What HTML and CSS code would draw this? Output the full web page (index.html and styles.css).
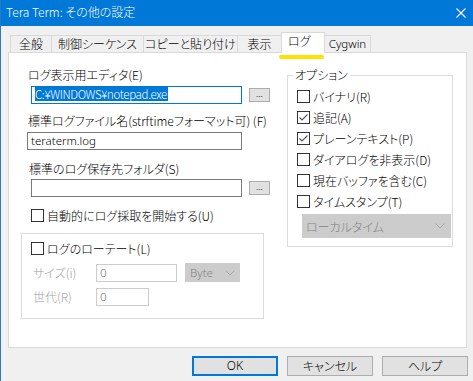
FILE: index.html
```html
<!DOCTYPE html>
<html lang="ja">
<head>
<meta charset="utf-8">
<title>Tera Term: その他の設定</title>
<link rel="stylesheet" href="styles.css">
</head>
<body>
<div class="window">
  <div class="titlebar">
    <span class="title">Tera Term: その他の設定</span>
    <svg class="close" width="10" height="10" viewBox="0 0 10 10"><path d="M0.5 0.5 L9.5 9.5 M9.5 0.5 L0.5 9.5" stroke="#fff" stroke-width="1.1" fill="none"/></svg>
  </div>
  <div class="tabs">
    <div class="tab t1">全般</div>
    <div class="tab t2">制御シーケンス</div>
    <div class="tab t3">コピーと貼り付け</div>
    <div class="tab t4">表示</div>
    <div class="tab t5 active">ログ</div>
    <div class="tab t6">Cygwin</div>
  </div>
  <div class="panel">
    <div class="marker"></div>
    <div class="leftcol">
      <div class="label l1">ログ表示用エディタ(E)</div>
      <div class="row r1">
        <div class="edit focused e1"><span class="sel">C:¥WINDOWS¥notepad.exe</span></div>
        <div class="dots">...</div>
      </div>
      <div class="label l2">標準ログファイル名(strftimeフォーマット可) (F)</div>
      <div class="edit e2">teraterm.log</div>
      <div class="label l3">標準のログ保存先フォルダ(S)</div>
      <div class="row r3">
        <div class="edit e3"></div>
        <div class="dots">...</div>
      </div>
      <div class="check c-auto"><span class="box"></span><span class="ctext">自動的にログ採取を開始する(U)</span></div>
      <div class="group rotate">
        <div class="check"><span class="box"></span><span class="ctext">ログのローテート(L)</span></div>
        <div class="row size">
          <span class="dlabel">サイズ(i)</span>
          <div class="edit disabled e-size">0</div>
          <div class="combo c-byte"><span>Byte</span><svg width="10" height="6" viewBox="0 0 10 6"><path d="M0.5 0.5 L5 5 L9.5 0.5" stroke="#a8a8a8" fill="none"/></svg></div>
        </div>
        <div class="row gen">
          <span class="dlabel">世代(R)</span>
          <div class="edit disabled e-gen">0</div>
        </div>
      </div>
    </div>
    <fieldset class="options">
      <legend>オプション</legend>
      <div class="check opt"><span class="box"></span><span class="ctext">バイナリ(R)</span></div>
      <div class="check opt"><span class="box checked"><svg width="11" height="11" viewBox="0 0 11 11"><path d="M1.5 5.5 L4 8 L9.5 2.5" stroke="#555" stroke-width="1.1" fill="none"/></svg></span><span class="ctext">追記(A)</span></div>
      <div class="check opt"><span class="box checked"><svg width="11" height="11" viewBox="0 0 11 11"><path d="M1.5 5.5 L4 8 L9.5 2.5" stroke="#555" stroke-width="1.1" fill="none"/></svg></span><span class="ctext">プレーンテキスト(P)</span></div>
      <div class="check opt"><span class="box"></span><span class="ctext">ダイアログを非表示(D)</span></div>
      <div class="check opt"><span class="box"></span><span class="ctext">現在バッファを含む(C)</span></div>
      <div class="check opt"><span class="box"></span><span class="ctext">タイムスタンプ(T)</span></div>
      <div class="combo c-time"><span>ローカルタイム</span><svg width="10" height="6" viewBox="0 0 10 6"><path d="M0.5 0.5 L5 5 L9.5 0.5" stroke="#a8a8a8" fill="none"/></svg></div>
    </fieldset>
  </div>
  <div class="buttons">
    <div class="btn default">OK</div>
    <div class="btn">キャンセル</div>
    <div class="btn">ヘルプ</div>
  </div>
</div>
</body>
</html>
```
FILE: styles.css
```css
* { box-sizing: border-box; }
html, body { margin: 0; padding: 0; }
body {
  width: 473px;
  height: 381px;
  overflow: hidden;
  background: #f0f0f0;
  font-family: "Noto Sans CJK JP", "Noto Sans", sans-serif;
  font-size: 12px;
  font-weight: 300;
  font-feature-settings: "palt";
  color: #000;
}
.window {
  width: 473px;
  height: 381px;
  border-left: 1px solid #2b79c4;
  background: #f0f0f0;
}
.titlebar {
  height: 26px;
  background: #0078d7;
  color: #fff;
  display: flex;
  align-items: center;
  justify-content: space-between;
  padding: 0 7px 2px 5px;
}
.title { font-size: 12px; line-height: 14px; }
.close { display: block; margin-top: 2px; }

.tabs {
  display: flex;
  align-items: flex-end;
  margin-top: 6px;
  padding-left: 9px;
  height: 20px;
}
.tab {
  height: 17px;
  border-left: 1px solid #d9d9d9;
  border-top: 1px solid #d9d9d9;
  text-align: center;
  line-height: 15px;
  background: #f0f0f0;
}
.t1 { width: 41px; }
.t2 { width: 92px; }
.t3 { width: 94px; }
.t4 { width: 44px; }
.t5 { width: 44px; }
.t6 { width: 46px; border-right: 1px solid #d9d9d9; font-family: "Noto Sans", sans-serif; font-size: 11.5px; }
.tab.active {
  height: 21px;
  margin-bottom: -1px;
  background: #fff;
  position: relative;
  z-index: 1;
  border-right: 1px solid #d9d9d9;
  line-height: 14px;
  padding-top: 1px;
  text-align: left;
  padding-left: 6px;
}
.tab.active + .tab { border-left: none; }

.panel {
  position: relative;
  margin-left: 7px;
  width: 459px;
  height: 296px;
  background: #fff;
  border: 1px solid #d9d9d9;
  display: flex;
  align-items: flex-start;
}
.marker {
  position: absolute;
  left: 270px;
  top: 2px;
  width: 45px;
  height: 4px;
  border-radius: 2px;
  background: #ffe200;
}
.leftcol {
  width: 278px;
  display: flex;
  flex-direction: column;
  align-items: flex-start;
}
.label { line-height: 14px; white-space: nowrap; }
.l1 { margin-top: 15px; margin-left: 19px; }
.l2 { margin-top: 10px; margin-left: 19px; }
.l3 { margin-top: 12px; margin-left: 20px; }
.row { display: flex; align-items: center; }
.r1 { margin-top: 4px; margin-left: 22px; }
.r3 { margin-top: 3px; margin-left: 22px; }
.edit {
  height: 18px;
  border: 1px solid #7a7a7a;
  background: #fff;
  padding-left: 3px;
  line-height: 15px;
  white-space: nowrap;
  font-family: "Noto Sans", "Noto Sans CJK JP", sans-serif;
  font-size: 11.5px;
}
.e1, .e3 { width: 211px; }
.e2 { width: 215px; margin-top: 4px; margin-left: 18px; }
.edit.focused { border-color: #0078d7; }
.sel {
  display: inline-block;
  background: #0078d7;
  color: #fff;
  line-height: 14px;
  padding-right: 1px;
  font-family: "Noto Sans CJK JP", sans-serif;
  font-size: 11.5px;
  font-feature-settings: normal;
  letter-spacing: -0.35px;
}
.dots {
  width: 21px;
  height: 14px;
  margin-left: 7px;
  background: #e1e1e1;
  border: 1px solid #adadad;
  font-size: 9px;
  line-height: 9px;
  text-align: center;
  color: #000;
}
.check {
  display: flex;
  align-items: center;
  height: 13px;
  white-space: nowrap;
}
.box {
  width: 13px;
  height: 13px;
  border: 1px solid #333;
  background: #fff;
  flex: none;
  display: flex;
}
.box svg { display: block; }
.ctext { margin-left: 3px; line-height: 14px; }
.c-auto { margin-top: 12px; margin-left: 22px; }
.group {
  border: 1px solid #dcdcdc;
}
.rotate {
  margin-top: 11px;
  margin-left: 12px;
  width: 243px;
  height: 86px;
  padding: 8px 0 0 9px;
}
.size { margin-top: 8px; height: 19px; }
.gen { margin-top: 6px; height: 18px; }
.dlabel {
  width: 63px;
  margin-left: 2px;
  color: #a0a0a0;
  line-height: 14px;
  white-space: nowrap;
}
.edit.disabled {
  border-color: #cccccc;
  color: #6d6d6d;
}
.e-size { width: 81px; }
.e-gen { width: 53px; }
.combo {
  display: flex;
  align-items: center;
  justify-content: space-between;
  background: #cccccc;
  border: 1px solid #cccccc;
  color: #838383;
  white-space: nowrap;
}
.combo svg { display: block; }
.c-byte {
  width: 55px;
  height: 19px;
  margin-left: 8px;
  padding: 0 4px 0 4px;
  font-family: "Noto Sans", sans-serif;
  font-size: 11.5px;
}
.options {
  margin: 15px 0 0 0;
  width: 166px;
  height: 179px;
  border: 1px solid #dcdcdc;
  padding: 4px 0 0 9px;
}
.options legend {
  padding: 0 2px;
  margin-left: -4px;
  line-height: 14px;
}
.opt { height: 21px; }
.c-time {
  margin-left: 5px;
  margin-top: 2px;
  width: 149px;
  height: 24px;
  padding: 0 5px 0 3px;
  font-size: 12px;
}
.buttons {
  display: flex;
  justify-content: flex-end;
  gap: 9px;
  margin-top: 8px;
  padding-right: 5px;
}
.btn {
  width: 86px;
  height: 20px;
  background: #e1e1e1;
  border: 1px solid #adadad;
  text-align: center;
  line-height: 17px;
}
.btn.default {
  border: 2px solid #0078d7;
  line-height: 15px;
  font-family: "Noto Sans", sans-serif;
}
```
